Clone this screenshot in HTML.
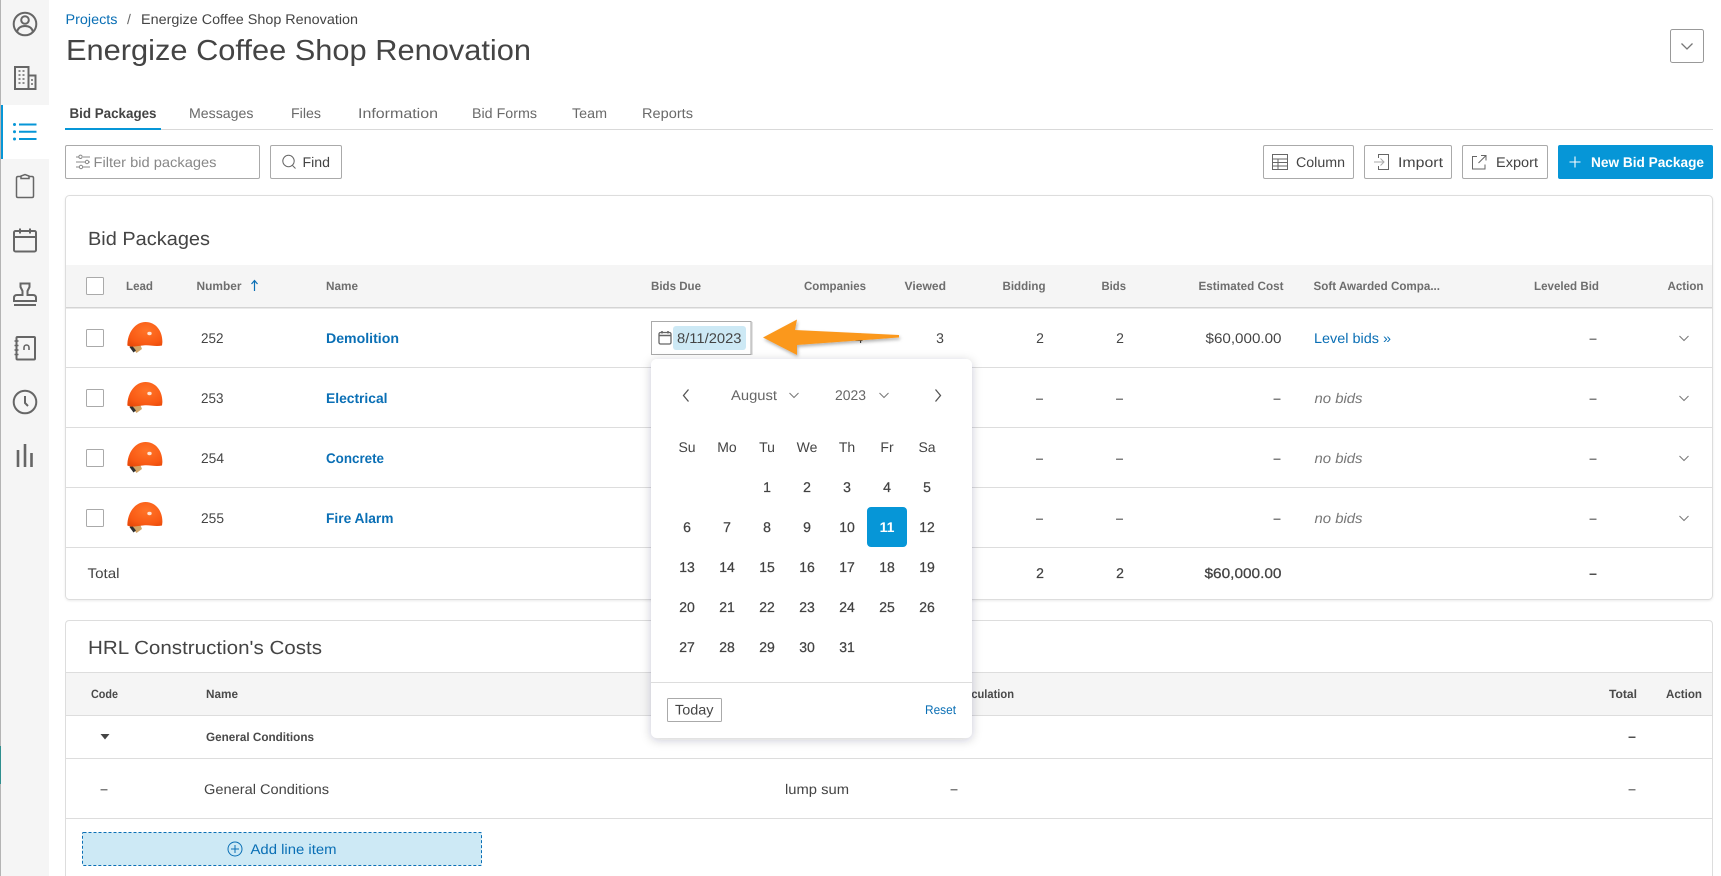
<!DOCTYPE html>
<html lang="en"><head><meta charset="utf-8"><title>Energize Coffee Shop Renovation</title>
<style>
html,body{margin:0;padding:0;background:#fff;width:1721px;height:876px;overflow:hidden}
svg{display:block;position:absolute;left:0;top:0}
text{font-family:"Liberation Sans",sans-serif;font-size:14px;fill:#444;text-rendering:geometricPrecision}
.h{font-size:12px;font-weight:bold;fill:#6e6e6e}
.hd{font-size:12px;font-weight:bold;fill:#4a4a4a}
.tab{fill:#6a6a6a}
.lnk{fill:#0a6fb5}
.b{font-weight:bold}
.c{text-anchor:middle}
.r{text-anchor:end}
.d{fill:#777;text-anchor:middle;font-weight:bold}
.m{stroke:#3c3c3c;stroke-width:.25}
.ic{fill:none;stroke:#666;stroke-width:2}
.th{fill:none;stroke:#777;stroke-width:1}
.ln{stroke:#ddd;stroke-width:1}
</style></head><body>
<svg width="1721" height="876" viewBox="0 0 1721 876" xmlns="http://www.w3.org/2000/svg">
<defs>
<radialGradient id="hg" cx="55%" cy="35%" r="75%"><stop offset="0" stop-color="#ff7428"/><stop offset=".7" stop-color="#f95a14"/><stop offset="1" stop-color="#e84a0a"/></radialGradient>
<g id="helmet">
<path d="M131 346 L136.500 353 L142 349 L140 344 Z" fill="#d2a566"/>
<path d="M129.500 347 L133.500 352.500 L136 350.500 L132 345.500 Z" fill="#2f2f2f"/>
<path d="M127.300 345.500 C127.500 332 135.500 322 145.500 322 C155.500 322 162.500 330.500 162.400 342 L162 345.500 C156 346.800 150 345 145 345.300 C138 345.700 132 348 127.300 345.500 Z" fill="url(#hg)"/>
<ellipse cx="149.500" cy="333.500" rx="2.200" ry="1.700" fill="#ffe3d2"/>
</g>
<path id="chev" d="M-4.500 -2 L0 2.500 L4.500 -2" fill="none" stroke="#777" stroke-width="1"/>
<filter id="sh" x="-10%" y="-10%" width="120%" height="120%"><feDropShadow dx="0" dy="2" stdDeviation="5" flood-color="#1a2a3a" flood-opacity=".22"/></filter>
<filter id="ash" x="-10%" y="-20%" width="120%" height="150%"><feDropShadow dx="1" dy="2" stdDeviation="1.500" flood-color="#000" flood-opacity=".3"/></filter>
<filter id="cs" x="-2%" y="-2%" width="104%" height="104%"><feDropShadow dx="0" dy="1" stdDeviation="1" flood-color="#000" flood-opacity=".08"/></filter>
</defs>

<!-- left rail -->
<rect x="0" y="0" width="1.200" height="876" fill="#b4b4b4"/>
<rect x="0" y="746" width="1.200" height="38" fill="#2f8f8f"/>
<rect x="1" y="0" width="48" height="876" fill="#f5f5f5"/>
<rect x="1" y="105" width="48" height="54" fill="#fff"/>
<rect x="1" y="105" width="2" height="54" fill="#0696d7"/>
<g class="ic">
<circle cx="25" cy="24" r="11.300"/><circle cx="25" cy="20" r="3.800"/><path d="M17 32 C18 27.500 21 26 25 26 C29 26 32 27.500 33 32"/>
<path d="M15 89 V67 H28.500 V89 Z M28.500 75.500 H35.500 V89 H15"/>
<path d="M18.500 71 h2 m2 0 h2 M18.500 75 h2 m2 0 h2 M18.500 79 h2 m2 0 h2 M18.500 83 h2 m2 0 h2 M31 80 h2 M31 84 h2" stroke-width="1.600"/>
<path d="M21 176.500 H18 Q16.500 176.500 16.500 178 V196 Q16.500 197.500 18 197.500 H32 Q33.500 197.500 33.500 196 V178 Q33.500 176.500 32 176.500 H29 M21 178.500 V176 L25 174.500 L29 176 V178.500 Z" stroke-width="1.500"/>
<rect x="14" y="231" width="22" height="20.500" rx="1.500"/><path d="M14 237 H36 M20 228.500 V233.500 M30 228.500 V233.500"/>
<path d="M20.500 283.500 H29.500 V287 L27.500 291 V295 H33 Q36 295 36 298 V301 H14 V298 Q14 295 17 295 H22.500 V291 L20.500 287 Z M14 305 H36"/>
<rect x="16.500" y="337" width="18.500" height="22.500" rx="1"/><path d="M14.500 341 h4 M14.500 345.500 h4 M14.500 350 h4 M14.500 354.500 h4" stroke-width="1.500"/><path d="M24 350 v-2.500 a2.500 2.500 0 0 1 5 0 V350" stroke-width="1.600"/>
<circle cx="25" cy="402" r="11.300"/><path d="M25 396 V403 L28 406"/>
<path d="M18 450 V467 M25 444 V467 M31.500 453 V467" stroke-width="2.600"/>
</g>
<g fill="#0696d7"><circle cx="14.500" cy="124.500" r="1.500"/><circle cx="14.500" cy="131.800" r="1.500"/><circle cx="14.500" cy="139" r="1.500"/></g>
<path d="M19 124.500 H36.500 M19 131.800 H36.500 M19 139 H36.500" stroke="#0696d7" stroke-width="2" fill="none"/>

<!-- page head -->
<text x="65.500" y="24" class="lnk" textLength="52" lengthAdjust="spacingAndGlyphs">Projects</text>
<text x="127" y="24" style="fill:#666">/</text>
<text x="141" y="24" textLength="217" lengthAdjust="spacingAndGlyphs">Energize Coffee Shop Renovation</text>
<text x="66" y="60" style="font-size:29px" textLength="465" lengthAdjust="spacingAndGlyphs">Energize Coffee Shop Renovation</text>
<rect x="1670.500" y="29.500" width="33" height="33" rx="2" fill="#fff" stroke="#999"/>
<path d="M1681.500 43.500 L1687 49 L1692.500 43.500" fill="none" stroke="#777" stroke-width="1.300"/>

<!-- tabs -->
<text x="69.500" y="118" class="b" style="fill:#444" textLength="87" lengthAdjust="spacingAndGlyphs">Bid Packages</text>
<text x="189" y="118" class="tab" textLength="64.500" lengthAdjust="spacingAndGlyphs">Messages</text>
<text x="291" y="118" class="tab" textLength="30" lengthAdjust="spacingAndGlyphs">Files</text>
<text x="358" y="118" class="tab" textLength="80" lengthAdjust="spacingAndGlyphs">Information</text>
<text x="472" y="118" class="tab" textLength="65" lengthAdjust="spacingAndGlyphs">Bid Forms</text>
<text x="572" y="118" class="tab" textLength="35" lengthAdjust="spacingAndGlyphs">Team</text>
<text x="642" y="118" class="tab" textLength="51" lengthAdjust="spacingAndGlyphs">Reports</text>
<rect x="65" y="129" width="1648" height="1" fill="#d9d9d9"/>
<rect x="65" y="128" width="96" height="2" fill="#0696d7"/>

<!-- toolbar -->
<rect x="65.500" y="145.500" width="194" height="33" rx="1.500" fill="#fff" stroke="#aaa"/>
<g fill="none" stroke="#888" stroke-width="1"><path d="M76 157 h3 m4 0 h7 M76 162 h9 m4 0 h1 M76 167 h3 m4 0 h7"/><circle cx="80.500" cy="156.800" r="1.700"/><circle cx="87" cy="162" r="1.700"/><circle cx="81" cy="167" r="1.700"/></g>
<text x="93.500" y="167" style="fill:#888" textLength="123" lengthAdjust="spacingAndGlyphs">Filter bid packages</text>
<rect x="270.500" y="145.500" width="71" height="33" rx="1.500" fill="#fff" stroke="#aaa"/>
<circle cx="288.500" cy="161" r="5.700" fill="none" stroke="#666" stroke-width="1"/><path d="M292.500 165.500 L295.500 168.500" stroke="#666" stroke-width="1"/>
<text x="302.500" y="167" textLength="27.500" lengthAdjust="spacingAndGlyphs">Find</text>

<rect x="1263.500" y="145.500" width="90" height="33" rx="1.500" fill="#fff" stroke="#aaa"/>
<g fill="none" stroke="#666" stroke-width="1"><rect x="1272.500" y="154.500" width="15" height="15"/><path d="M1272.500 159 H1287.500 M1272.500 162.500 H1287.500 M1272.500 166 H1287.500 M1278 159 V169.500"/></g>
<text x="1296" y="167" textLength="49" lengthAdjust="spacingAndGlyphs">Column</text>
<rect x="1364.500" y="145.500" width="87" height="33" rx="1.500" fill="#fff" stroke="#aaa"/>
<path d="M1378.500 158 V154.500 H1388.500 V169.500 H1378.500 V166" fill="none" stroke="#666" stroke-width="1"/>
<path d="M1374 162 H1384 M1380.500 158.500 L1384 162 L1380.500 165.500" fill="none" stroke="#aaa" stroke-width="1"/>
<text x="1398" y="167" textLength="45" lengthAdjust="spacingAndGlyphs">Import</text>
<rect x="1462.500" y="145.500" width="85" height="33" rx="1.500" fill="#fff" stroke="#aaa"/>
<path d="M1477 156.500 H1472.500 V169 H1485 V164.500" fill="none" stroke="#666" stroke-width="1"/>
<path d="M1478.500 163 L1485.500 156 M1481 155.500 H1486 V160.500" fill="none" stroke="#666" stroke-width="1"/>
<text x="1496" y="167" textLength="42" lengthAdjust="spacingAndGlyphs">Export</text>
<rect x="1558" y="145" width="155" height="34" rx="2" fill="#0696d7"/>
<path d="M1569.500 162 H1580.500 M1575 156.500 V167.500" stroke="#fff" stroke-width="1.100"/>
<text x="1591" y="167" class="b" style="fill:#fff" textLength="113" lengthAdjust="spacingAndGlyphs">New Bid Package</text>

<!-- Bid Packages card -->
<rect x="65.500" y="195.500" width="1647" height="404" rx="4" fill="#fff" stroke="#ddd" filter="url(#cs)"/>
<text x="88" y="245" style="font-size:19px" textLength="122" lengthAdjust="spacingAndGlyphs">Bid Packages</text>
<rect x="66" y="265" width="1646" height="42" fill="#f5f5f5"/>
<rect x="66" y="307" width="1646" height="1.500" fill="#d4d4d4"/>
<rect x="86.500" y="277.500" width="17" height="17" rx="1" fill="#fff" stroke="#aaa"/>
<text class="h" x="126" y="290" textLength="27" lengthAdjust="spacingAndGlyphs">Lead</text>
<text class="h" x="196.500" y="290" textLength="45" lengthAdjust="spacingAndGlyphs">Number</text>
<text class="h" x="326" y="290" textLength="32" lengthAdjust="spacingAndGlyphs">Name</text>
<text class="h" x="651" y="290" textLength="50" lengthAdjust="spacingAndGlyphs">Bids Due</text>
<text class="h" x="804" y="290" textLength="62" lengthAdjust="spacingAndGlyphs">Companies</text>
<text class="h" x="904.500" y="290" textLength="41.500" lengthAdjust="spacingAndGlyphs">Viewed</text>
<text class="h" x="1002.500" y="290" textLength="43" lengthAdjust="spacingAndGlyphs">Bidding</text>
<text class="h" x="1101.500" y="290" textLength="24.500" lengthAdjust="spacingAndGlyphs">Bids</text>
<text class="h" x="1198.500" y="290" textLength="85" lengthAdjust="spacingAndGlyphs">Estimated Cost</text>
<text class="h" x="1313.500" y="290" textLength="126.500" lengthAdjust="spacingAndGlyphs">Soft Awarded Compa...</text>
<text class="h" x="1534" y="290" textLength="65" lengthAdjust="spacingAndGlyphs">Leveled Bid</text>
<text class="h" x="1667.500" y="290" textLength="36" lengthAdjust="spacingAndGlyphs">Action</text>
<path d="M254.500 291 V281 M251.500 284 L254.500 280.500 L257.500 284" fill="none" stroke="#0a6fb5" stroke-width="1.200"/>

<g class="ln"><line x1="66" x2="1712" y1="367.500" y2="367.500"/><line x1="66" x2="1712" y1="427.500" y2="427.500"/><line x1="66" x2="1712" y1="487.500" y2="487.500"/><line x1="66" x2="1712" y1="547.500" y2="547.500"/></g>

<g fill="#fff" stroke="#aaa"><rect x="86.500" y="329.500" width="17" height="17" rx="1"/><rect x="86.500" y="389.500" width="17" height="17" rx="1"/><rect x="86.500" y="449.500" width="17" height="17" rx="1"/><rect x="86.500" y="509.500" width="17" height="17" rx="1"/></g>
<use href="#helmet"/><use href="#helmet" y="60"/><use href="#helmet" y="120"/><use href="#helmet" y="180"/>

<text x="201" y="343" textLength="22.500" lengthAdjust="spacingAndGlyphs">252</text>
<text x="201" y="403" textLength="22.500" lengthAdjust="spacingAndGlyphs">253</text>
<text x="201" y="463" textLength="23" lengthAdjust="spacingAndGlyphs">254</text>
<text x="201" y="523" textLength="23" lengthAdjust="spacingAndGlyphs">255</text>
<text x="326" y="343" class="lnk b" textLength="73" lengthAdjust="spacingAndGlyphs">Demolition</text>
<text x="326" y="403" class="lnk b" textLength="61.500" lengthAdjust="spacingAndGlyphs">Electrical</text>
<text x="326" y="463" class="lnk b" textLength="58" lengthAdjust="spacingAndGlyphs">Concrete</text>
<text x="326" y="523" class="lnk b" textLength="67.500" lengthAdjust="spacingAndGlyphs">Fire Alarm</text>

<text x="859" y="343" class="c">4</text>
<text x="940" y="343" class="c">3</text>
<text x="1040" y="343" class="c">2</text>
<text x="1120" y="343" class="c">2</text>
<text x="1205.500" y="343" textLength="76" lengthAdjust="spacingAndGlyphs">$60,000.00</text>
<text x="1314" y="343" class="lnk" textLength="77" lengthAdjust="spacingAndGlyphs">Level bids »</text>
<text x="1593" y="343" class="d">–</text>
<use href="#chev" x="1684" y="338"/>

<text x="1039.500" y="403" class="d">–</text><text x="1119.500" y="403" class="d">–</text><text x="1277" y="403" class="d">–</text>
<text x="1039.500" y="463" class="d">–</text><text x="1119.500" y="463" class="d">–</text><text x="1277" y="463" class="d">–</text>
<text x="1039.500" y="523" class="d">–</text><text x="1119.500" y="523" class="d">–</text><text x="1277" y="523" class="d">–</text>
<text x="1593" y="403" class="d">–</text><text x="1593" y="463" class="d">–</text><text x="1593" y="523" class="d">–</text>
<text x="1314.500" y="403" font-style="italic" style="fill:#777" textLength="48" lengthAdjust="spacingAndGlyphs">no bids</text>
<text x="1314.500" y="463" font-style="italic" style="fill:#777" textLength="48" lengthAdjust="spacingAndGlyphs">no bids</text>
<text x="1314.500" y="523" font-style="italic" style="fill:#777" textLength="48" lengthAdjust="spacingAndGlyphs">no bids</text>
<use href="#chev" x="1684" y="398"/><use href="#chev" x="1684" y="458"/><use href="#chev" x="1684" y="518"/>

<text x="87.500" y="578" textLength="32" lengthAdjust="spacingAndGlyphs">Total</text>
<text x="1040" y="578" class="c m">2</text>
<text x="1120" y="578" class="c m">2</text>
<text x="1204.500" y="578" class="m" textLength="77" lengthAdjust="spacingAndGlyphs">$60,000.00</text>
<text x="1593" y="578" class="d" style="fill:#444">–</text>

<!-- Costs card -->
<path d="M65.500 880 V624.500 Q65.500 620.500 69.500 620.500 H1708.500 Q1712.500 620.500 1712.500 624.500 V880" fill="#fff" stroke="#ddd"/>
<text x="88" y="654" style="font-size:19px" textLength="234" lengthAdjust="spacingAndGlyphs">HRL Construction's Costs</text>
<rect x="66" y="672.500" width="1646" height="42.500" fill="#f5f5f5"/>
<g class="ln"><line x1="66" x2="1712" y1="672.500" y2="672.500"/><line x1="66" x2="1712" y1="715.500" y2="715.500"/><line x1="66" x2="1712" y1="758.500" y2="758.500"/><line x1="66" x2="1712" y1="818.500" y2="818.500"/></g>
<text class="hd" x="91" y="698" textLength="27" lengthAdjust="spacingAndGlyphs">Code</text>
<text class="hd" x="206" y="698" textLength="32" lengthAdjust="spacingAndGlyphs">Name</text>
<text class="hd" x="954" y="698" textLength="60" lengthAdjust="spacingAndGlyphs">Calculation</text>
<text class="hd" x="1609" y="698" textLength="28" lengthAdjust="spacingAndGlyphs">Total</text>
<text class="hd" x="1666" y="698" textLength="36" lengthAdjust="spacingAndGlyphs">Action</text>
<path d="M100.500 734 H109.500 L105 739.500 Z" fill="#444"/>
<text class="hd" x="206" y="741" textLength="108" lengthAdjust="spacingAndGlyphs">General Conditions</text>
<text x="1632" y="741" class="d" style="fill:#444">–</text>
<text x="104" y="793.500" class="d">–</text>
<text x="204" y="794" textLength="125" lengthAdjust="spacingAndGlyphs">General Conditions</text>
<text x="785" y="794" textLength="64" lengthAdjust="spacingAndGlyphs">lump sum</text>
<text x="954" y="793.500" class="d">–</text>
<text x="1632" y="793.500" class="d">–</text>
<rect x="82.500" y="832.500" width="399" height="33" rx="1" fill="#cde9f5" stroke="#0a6fb5" stroke-dasharray="3 2"/>
<circle cx="235" cy="849" r="7" fill="none" stroke="#0a6fb5" stroke-width="1"/><path d="M231 849 H239 M235 845 V853" stroke="#0a6fb5" stroke-width="1"/>
<text x="250.500" y="854" class="lnk" textLength="86" lengthAdjust="spacingAndGlyphs">Add line item</text>

<!-- Date input -->
<rect x="751" y="322" width="2" height="33" fill="#e4e4e4"/>
<rect x="651.500" y="321.500" width="99.500" height="33" fill="#fff" stroke="#aaa"/>
<g fill="none" stroke="#666" stroke-width="1.300"><rect x="659" y="332.500" width="12" height="11.500" rx="1.500"/><path d="M659 335.500 H671 M662 331 V333.500 M668 331 V333.500" stroke-width="1.600"/></g>
<rect x="673" y="326" width="73" height="24" rx="3" fill="#cde9f5"/>
<text x="677" y="343" textLength="64.500" lengthAdjust="spacingAndGlyphs">8/11/2023</text>

<!-- Popover -->
<rect x="651" y="359" width="321" height="379" rx="6" fill="#fff" filter="url(#sh)"/>
<path d="M688.500 389.500 L683.500 395.500 L688.500 401.500 M935.500 389.500 L940.500 395.500 L935.500 401.500" fill="none" stroke="#555" stroke-width="1.300"/>
<text x="731" y="400" style="fill:#666" textLength="46" lengthAdjust="spacingAndGlyphs">August</text>
<use href="#chev" x="794" y="395"/>
<text x="835" y="400" style="fill:#666" textLength="31" lengthAdjust="spacingAndGlyphs">2023</text>
<use href="#chev" x="884" y="395"/>

<text class="c" x="687" y="452">Su</text><text class="c" x="727" y="452">Mo</text><text class="c" x="767" y="452">Tu</text><text class="c" x="807" y="452">We</text><text class="c" x="847" y="452">Th</text><text class="c" x="887" y="452">Fr</text><text class="c" x="927" y="452">Sa</text>
<text class="c m" x="767" y="492">1</text><text class="c m" x="807" y="492">2</text><text class="c m" x="847" y="492">3</text><text class="c m" x="887" y="492">4</text><text class="c m" x="927" y="492">5</text>
<text class="c m" x="687" y="532">6</text><text class="c m" x="727" y="532">7</text><text class="c m" x="767" y="532">8</text><text class="c m" x="807" y="532">9</text><text class="c m" x="847" y="532">10</text>
<rect x="867" y="507" width="40" height="40" rx="4" fill="#0696d7"/>
<text class="c b" x="887" y="532" style="fill:#fff">11</text><text class="c m" x="927" y="532">12</text>
<text class="c m" x="687" y="572">13</text><text class="c m" x="727" y="572">14</text><text class="c m" x="767" y="572">15</text><text class="c m" x="807" y="572">16</text><text class="c m" x="847" y="572">17</text><text class="c m" x="887" y="572">18</text><text class="c m" x="927" y="572">19</text>
<text class="c m" x="687" y="612">20</text><text class="c m" x="727" y="612">21</text><text class="c m" x="767" y="612">22</text><text class="c m" x="807" y="612">23</text><text class="c m" x="847" y="612">24</text><text class="c m" x="887" y="612">25</text><text class="c m" x="927" y="612">26</text>
<text class="c m" x="687" y="652">27</text><text class="c m" x="727" y="652">28</text><text class="c m" x="767" y="652">29</text><text class="c m" x="807" y="652">30</text><text class="c m" x="847" y="652">31</text>
<rect x="651" y="682" width="321" height="1" fill="#ddd"/>
<rect x="667.500" y="698.500" width="54" height="23" rx="1" fill="#fff" stroke="#aaa"/>
<text x="675" y="714.500" textLength="38.500" lengthAdjust="spacingAndGlyphs">Today</text>
<text x="925" y="714" style="font-size:12.500px;fill:#0a6fb5" textLength="31" lengthAdjust="spacingAndGlyphs">Reset</text>

<!-- Annotation arrow -->
<path d="M763 337.500 L797 319.500 L795 330 L899 335 L899 337.500 L797 345 L797 355 Z" fill="#fb981f" filter="url(#ash)"/>
</svg>
</body></html>
